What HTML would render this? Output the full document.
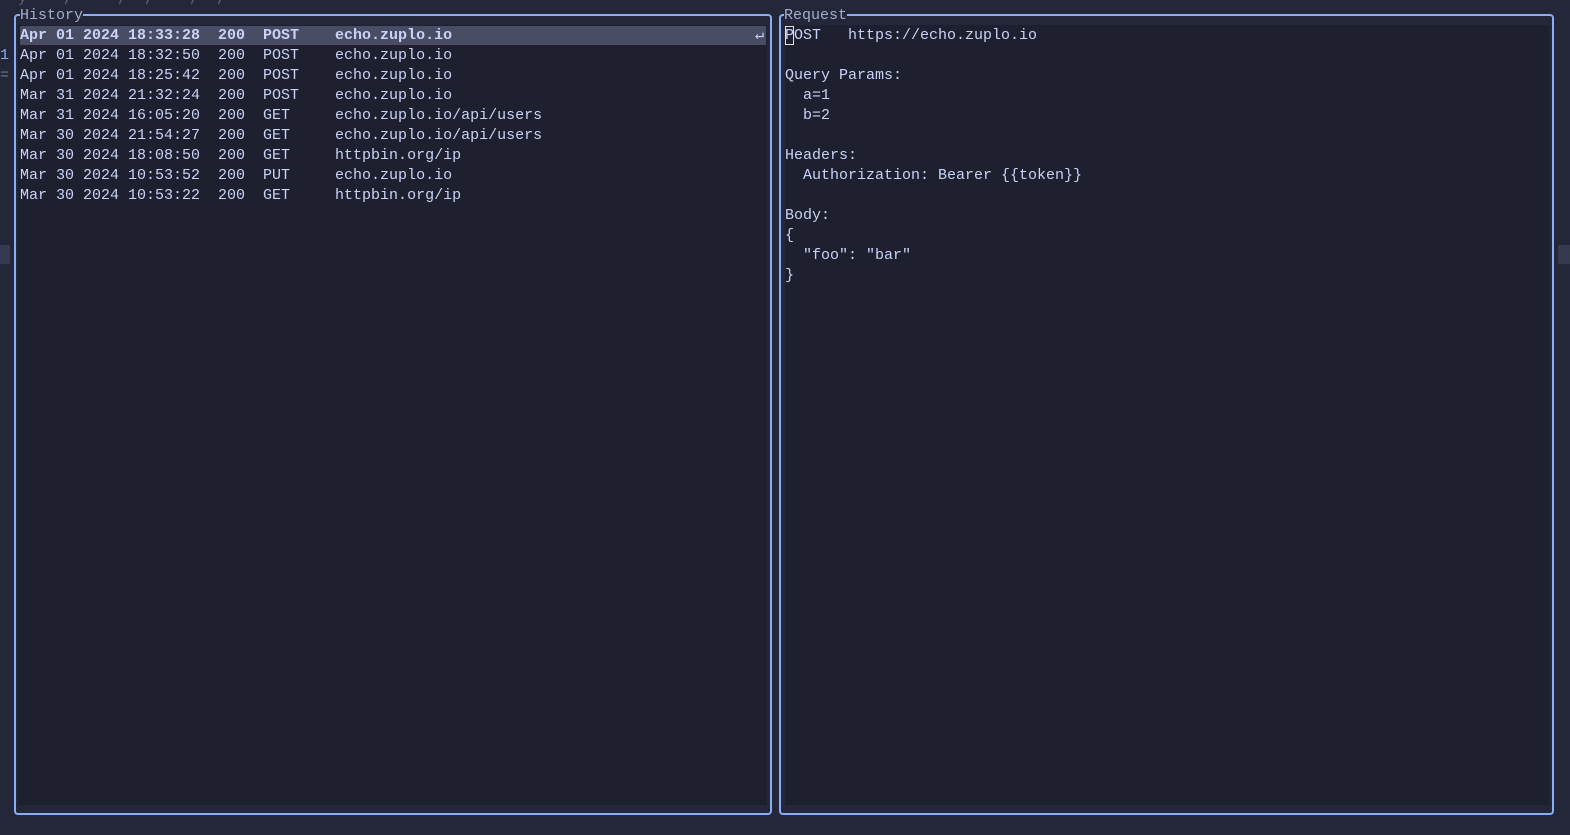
<!DOCTYPE html>
<html><head><meta charset="utf-8"><style>
html,body{margin:0;padding:0;width:1570px;height:835px;background:#24273a;overflow:hidden;font-family:"Liberation Mono",monospace;font-size:15px;color:#cad3f5}
.box{position:absolute;border:2px solid #8aadf4;border-radius:4px;box-sizing:border-box}
.dark{position:absolute;background:#1e2030}
.t{position:absolute;white-space:pre;line-height:20px;height:20px}
.title{position:absolute;background:#24273a;color:#a5adcb;white-space:pre;line-height:16px;font-size:15px}
.sel{background:#494d64;font-weight:bold}
</style></head><body>
<div class="t" style="left:0;top:-11px;color:#5b6078">  y    ,     ,  ,    ,  ,</div>
<div class="t" style="left:0;top:46px;color:#8aadf4">1</div>
<div class="t" style="left:0;top:66px;color:#6e738d">=</div>
<div style="position:absolute;left:0;top:245px;width:10px;height:19px;background:#363a4f"></div>
<div style="position:absolute;left:1558px;top:245px;width:12px;height:19px;background:#363a4f"></div>

<div class="box" style="left:14px;top:14px;width:758px;height:801px"></div>
<div class="dark" style="left:18px;top:25px;width:749px;height:780px"></div>
<div class="title" style="left:20px;top:8px">History</div>

<div class="box" style="left:779px;top:14px;width:775px;height:801px"></div>
<div class="dark" style="left:785px;top:25px;width:764px;height:780px"></div>
<div class="title" style="left:784px;top:8px">Request</div>

<div class="t sel" style="left:20px;top:26px;width:746px;height:19px;line-height:19px">Apr 01 2024 18:33:28  200  POST    echo.zuplo.io<span style="position:absolute;right:2px;font-weight:normal">↵</span></div>
<div class="t" style="left:20px;top:46px">Apr 01 2024 18:32:50  200  POST    echo.zuplo.io</div>
<div class="t" style="left:20px;top:66px">Apr 01 2024 18:25:42  200  POST    echo.zuplo.io</div>
<div class="t" style="left:20px;top:86px">Mar 31 2024 21:32:24  200  POST    echo.zuplo.io</div>
<div class="t" style="left:20px;top:106px">Mar 31 2024 16:05:20  200  GET     echo.zuplo.io/api/users</div>
<div class="t" style="left:20px;top:126px">Mar 30 2024 21:54:27  200  GET     echo.zuplo.io/api/users</div>
<div class="t" style="left:20px;top:146px">Mar 30 2024 18:08:50  200  GET     httpbin.org/ip</div>
<div class="t" style="left:20px;top:166px">Mar 30 2024 10:53:52  200  PUT     echo.zuplo.io</div>
<div class="t" style="left:20px;top:186px">Mar 30 2024 10:53:22  200  GET     httpbin.org/ip</div>

<div style="position:absolute;left:785px;top:26px;width:9px;height:19px;border:1px solid #f4dbd6;box-sizing:border-box"></div>
<div class="t" style="left:785px;top:26px">POST   https://echo.zuplo.io</div>
<div class="t" style="left:785px;top:66px">Query Params:</div>
<div class="t" style="left:785px;top:86px">  a=1</div>
<div class="t" style="left:785px;top:106px">  b=2</div>
<div class="t" style="left:785px;top:146px">Headers:</div>
<div class="t" style="left:785px;top:166px">  Authorization: Bearer {{token}}</div>
<div class="t" style="left:785px;top:206px">Body:</div>
<div class="t" style="left:785px;top:226px">{</div>
<div class="t" style="left:785px;top:246px">  "foo": "bar"</div>
<div class="t" style="left:785px;top:266px">}</div>
</body></html>
